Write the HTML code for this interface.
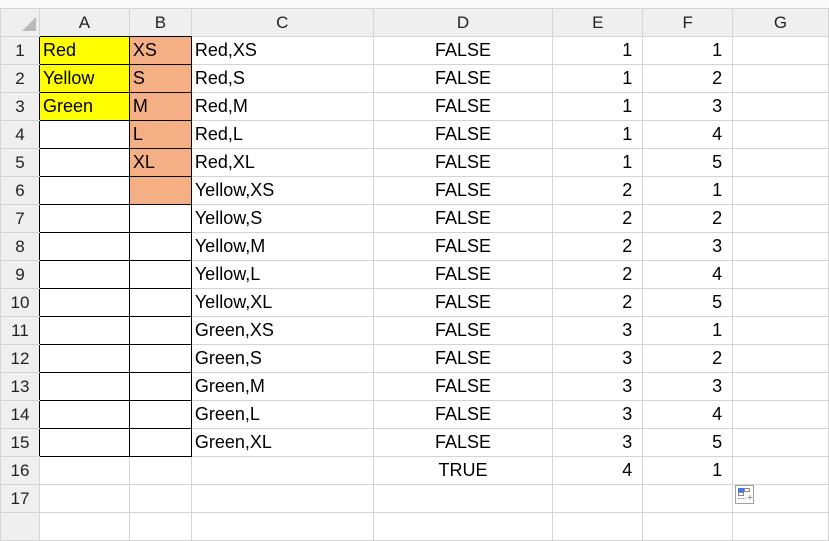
<!DOCTYPE html>
<html><head><style>
body{margin:0;width:829px;height:517px;overflow:hidden;background:#fff;font-family:"Liberation Sans",Arial,sans-serif;}
table{border-collapse:collapse;table-layout:fixed;position:absolute;left:0;top:8px;}
td{border:1px solid #d4d4d4;height:27px;padding:0 3px;font-size:18px;white-space:nowrap;overflow:hidden;color:#000;}
tr.h td{height:27px;background:#efefef;text-align:center;color:#222;font-size:17px;}
td.r{background:#efefef;text-align:center;color:#222;font-size:17px;}
td.y{background:#ffff00;border:1px solid #000;}
td.o{background:#f4b084;border:1px solid #000;}
td.b{border:1px solid #000;}
td.rb{border-right:1px solid #000;}
td.hb{border-bottom:1px solid #000;}
td.n{text-align:right;padding-right:10px;}
td.c{text-align:center;}
.top{position:absolute;left:0;top:0;width:829px;height:8px;background:#fafafa;}
.corner{position:absolute;left:22px;top:17px;width:0;height:0;border-left:14px solid transparent;border-bottom:14px solid #b9b9b9;}
.paste{position:absolute;left:735px;top:485px;width:19px;height:19px;border:1px solid #a0a0a0;background:#fff;box-sizing:border-box;}
</style></head><body>
<div class="top"></div>
<table>
<colgroup><col style="width:39px"><col style="width:90px"><col style="width:62px"><col style="width:182px"><col style="width:180px"><col style="width:90px"><col style="width:90px"><col style="width:96px"></colgroup>
<tr class="h"><td></td><td class="hb">A</td><td class="hb">B</td><td>C</td><td>D</td><td>E</td><td>F</td><td>G</td></tr>
<tr><td class="r rb">1</td><td class="y">Red</td><td class="o">XS</td><td>Red,XS</td><td class="c">FALSE</td><td class="n">1</td><td class="n">1</td><td></td></tr>
<tr><td class="r rb">2</td><td class="y">Yellow</td><td class="o">S</td><td>Red,S</td><td class="c">FALSE</td><td class="n">1</td><td class="n">2</td><td></td></tr>
<tr><td class="r rb">3</td><td class="y">Green</td><td class="o">M</td><td>Red,M</td><td class="c">FALSE</td><td class="n">1</td><td class="n">3</td><td></td></tr>
<tr><td class="r rb">4</td><td class="b"></td><td class="o">L</td><td>Red,L</td><td class="c">FALSE</td><td class="n">1</td><td class="n">4</td><td></td></tr>
<tr><td class="r rb">5</td><td class="b"></td><td class="o">XL</td><td>Red,XL</td><td class="c">FALSE</td><td class="n">1</td><td class="n">5</td><td></td></tr>
<tr><td class="r rb">6</td><td class="b"></td><td class="o"></td><td>Yellow,XS</td><td class="c">FALSE</td><td class="n">2</td><td class="n">1</td><td></td></tr>
<tr><td class="r rb">7</td><td class="b"></td><td class="b"></td><td>Yellow,S</td><td class="c">FALSE</td><td class="n">2</td><td class="n">2</td><td></td></tr>
<tr><td class="r rb">8</td><td class="b"></td><td class="b"></td><td>Yellow,M</td><td class="c">FALSE</td><td class="n">2</td><td class="n">3</td><td></td></tr>
<tr><td class="r rb">9</td><td class="b"></td><td class="b"></td><td>Yellow,L</td><td class="c">FALSE</td><td class="n">2</td><td class="n">4</td><td></td></tr>
<tr><td class="r rb">10</td><td class="b"></td><td class="b"></td><td>Yellow,XL</td><td class="c">FALSE</td><td class="n">2</td><td class="n">5</td><td></td></tr>
<tr><td class="r rb">11</td><td class="b"></td><td class="b"></td><td>Green,XS</td><td class="c">FALSE</td><td class="n">3</td><td class="n">1</td><td></td></tr>
<tr><td class="r rb">12</td><td class="b"></td><td class="b"></td><td>Green,S</td><td class="c">FALSE</td><td class="n">3</td><td class="n">2</td><td></td></tr>
<tr><td class="r rb">13</td><td class="b"></td><td class="b"></td><td>Green,M</td><td class="c">FALSE</td><td class="n">3</td><td class="n">3</td><td></td></tr>
<tr><td class="r rb">14</td><td class="b"></td><td class="b"></td><td>Green,L</td><td class="c">FALSE</td><td class="n">3</td><td class="n">4</td><td></td></tr>
<tr><td class="r rb">15</td><td class="b"></td><td class="b"></td><td>Green,XL</td><td class="c">FALSE</td><td class="n">3</td><td class="n">5</td><td></td></tr>
<tr><td class="r">16</td><td></td><td></td><td></td><td class="c">TRUE</td><td class="n">4</td><td class="n">1</td><td></td></tr>
<tr><td class="r">17</td><td></td><td></td><td></td><td></td><td></td><td></td><td></td></tr>
<tr><td class="r"></td><td></td><td></td><td></td><td></td><td></td><td></td><td></td></tr>
</table>
<div class="corner"></div>
<div class="paste">
<div style="position:absolute;left:2px;top:2px;width:6px;height:4px;background:#3a7be0"></div>
<div style="position:absolute;left:8px;top:2px;width:6px;height:4px;border:1px solid #888;box-sizing:border-box"></div>
<div style="position:absolute;left:2px;top:6px;width:6px;height:4px;border:1px solid #888;box-sizing:border-box"></div>
<div style="position:absolute;left:2px;top:12px;width:8px;border-top:1px dotted #888"></div>
<div style="position:absolute;left:11px;top:8px;font-size:10px;line-height:9px;color:#777">+</div>
</div>
</body></html>
